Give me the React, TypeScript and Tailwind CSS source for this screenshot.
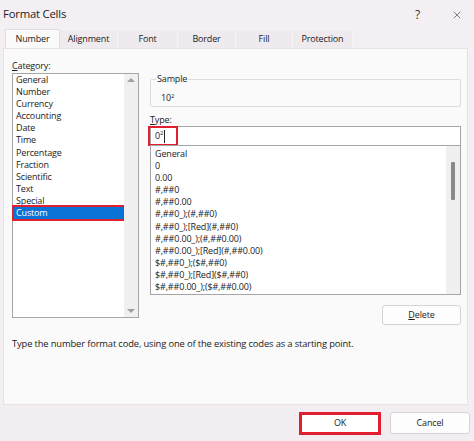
import { X } from "lucide-react";

const categories = [
  "General",
  "Number",
  "Currency",
  "Accounting",
  "Date",
  "Time",
  "Percentage",
  "Fraction",
  "Scientific",
  "Text",
  "Special",
  "Custom",
];

const formats = [
  "General",
  "0",
  "0.00",
  "#,##0",
  "#,##0.00",
  "#,##0_);(#,##0)",
  "#,##0_);[Red](#,##0)",
  "#,##0.00_);(#,##0.00)",
  "#,##0.00_);[Red](#,##0.00)",
  "$#,##0_);($#,##0)",
  "$#,##0_);[Red]($#,##0)",
  "$#,##0.00_);($#,##0.00)",
];

const tabs = [
  { label: "Number", w: "w-[55px]" },
  { label: "Alignment", w: "w-[58px]" },
  { label: "Font", w: "w-[60px]" },
  { label: "Border", w: "w-[58px]" },
  { label: "Fill", w: "w-[57px]" },
  { label: "Protection", w: "w-[60px]" },
];

const App = () => {
  return (
    <div className="w-[474px] h-[441px] flex flex-col overflow-hidden bg-[#f4eff3] text-[#1b1b1b] font-['Open_Sans',sans-serif] text-[9px] tracking-[-0.15px]">
      {/* title bar */}
      <div className="h-[29px] flex items-center pl-[3px] pr-[11px]">
        <span className="text-[11.3px] tracking-[-0.2px]">Format Cells</span>
        <span className="ml-auto text-[12px] text-[#333]">?</span>
        <X className="ml-[31px] w-[12px] h-[12px] text-[#333]" strokeWidth={1.2} />
      </div>

      {/* tabs */}
      <div className="h-[19px] flex pl-[5px]">
        {tabs.map((t, i) => (
          <div
            key={t.label}
            className={`${t.w} flex items-center justify-center ${
              i === 0
                ? "bg-[#fafafa] border-t border-l border-r border-[#e2dee2]"
                : "bg-[#eeeaee] border-t border-r border-[#f7f4f7]"
            }`}
          >
            {t.label}
          </div>
        ))}
      </div>

      {/* panel */}
      <div className="h-[357px] ml-[3px] mr-[6px] bg-[#fafafa] border border-[#e6e2e6] pt-[9px] pl-[8px] pr-[6px]">
        <div className="flex gap-[11px]">
          {/* category column */}
          <div className="w-[127px] flex flex-col">
            <div className="h-[15px] leading-[15px]">
              <span className="underline underline-offset-1">C</span>ategory:
            </div>
            <div className="h-[245px] flex border border-[#a6a6a6] bg-white">
              <div className="flex-1 flex flex-col">
                {categories.map((c) =>
                  c === "Custom" ? (
                    <div
                      key={c}
                      className="h-[12.1px] leading-[12.1px] mx-[1px] pl-[2px] bg-[#0a74d6] text-white outline-2 outline-[#e0202e]"
                    >
                      {c}
                    </div>
                  ) : (
                    <div key={c} className="h-[12.1px] leading-[12.1px] pl-[3px]">
                      {c}
                    </div>
                  )
                )}
              </div>
              <div className="w-[14px] bg-[#f0f0f0] flex flex-col items-center justify-between py-[4px]">
                <div className="w-0 h-0 border-l-[4px] border-r-[4px] border-b-[4px] border-l-transparent border-r-transparent border-b-[#a0a0a0]" />
                <div className="w-0 h-0 border-l-[4px] border-r-[4px] border-t-[4px] border-l-transparent border-r-transparent border-t-[#a0a0a0]" />
              </div>
            </div>
          </div>

          {/* right column */}
          <div className="flex-1 flex flex-col">
            <fieldset className="mt-[15px] border border-[#dcdcdc] rounded-[2px] px-[5px] pb-[2px]">
              <legend className="px-[1px] leading-[12px]">Sample</legend>
              <div className="mt-[7px] ml-[5px] leading-[12px]">
                10<sup className="text-[6px] -top-[3px]">2</sup>
              </div>
            </fieldset>
            <div className="mt-[7px] leading-[12px]">
              <span className="underline underline-offset-1">T</span>ype:
            </div>
            <div className="h-[20px] border border-[#a6a6a6] bg-white flex items-center">
              <div className="h-[20px] -ml-[3px] -my-[1px] w-[30px] border-[2px] border-[#e0202e] flex items-center pl-[5px]">
                0<sup className="text-[6px] -top-[3px]">2</sup>
                <span className="ml-[1px] w-px h-[13px] bg-[#222]" />
              </div>
            </div>
            <div className="h-[150px] -mt-px flex border border-[#a6a6a6] bg-white">
              <div className="flex-1 flex flex-col pt-[2px] overflow-hidden">
                {formats.map((f) => (
                  <div key={f} className="h-[12.1px] leading-[12.1px] pl-[4px] whitespace-nowrap">
                    {f}
                  </div>
                ))}
              </div>
              <div className="w-[14px] bg-[#f0f0f0] flex justify-center pt-[16px]">
                <div className="w-[4px] h-[38px] bg-[#8a8a8a] rounded-[1px]" />
              </div>
            </div>
            <button className="self-end mt-[10px] w-[79px] h-[20px] bg-[#fdfdfd] border border-[#d4d4d4] rounded-[3px] flex items-center justify-center">
              <span className="underline underline-offset-1">D</span>elete
            </button>
          </div>
        </div>
        <div className="mt-[13px] leading-[12px] text-[9.4px]">
          Type the number format code, using one of the existing codes as a starting point.
        </div>
      </div>

      {/* footer */}
      <div className="flex-1 flex items-center justify-end gap-[9px] pr-[4px] bg-[#f1edf1]">
        <button className="w-[82px] h-[23px] bg-white border-[3px] border-[#e0202e] flex items-center justify-center">
          OK
        </button>
        <button className="w-[80px] h-[22px] bg-[#fdfdfd] border border-[#d4d4d4] rounded-[3px] flex items-center justify-center">
          Cancel
        </button>
      </div>
    </div>
  );
};

export default App;
